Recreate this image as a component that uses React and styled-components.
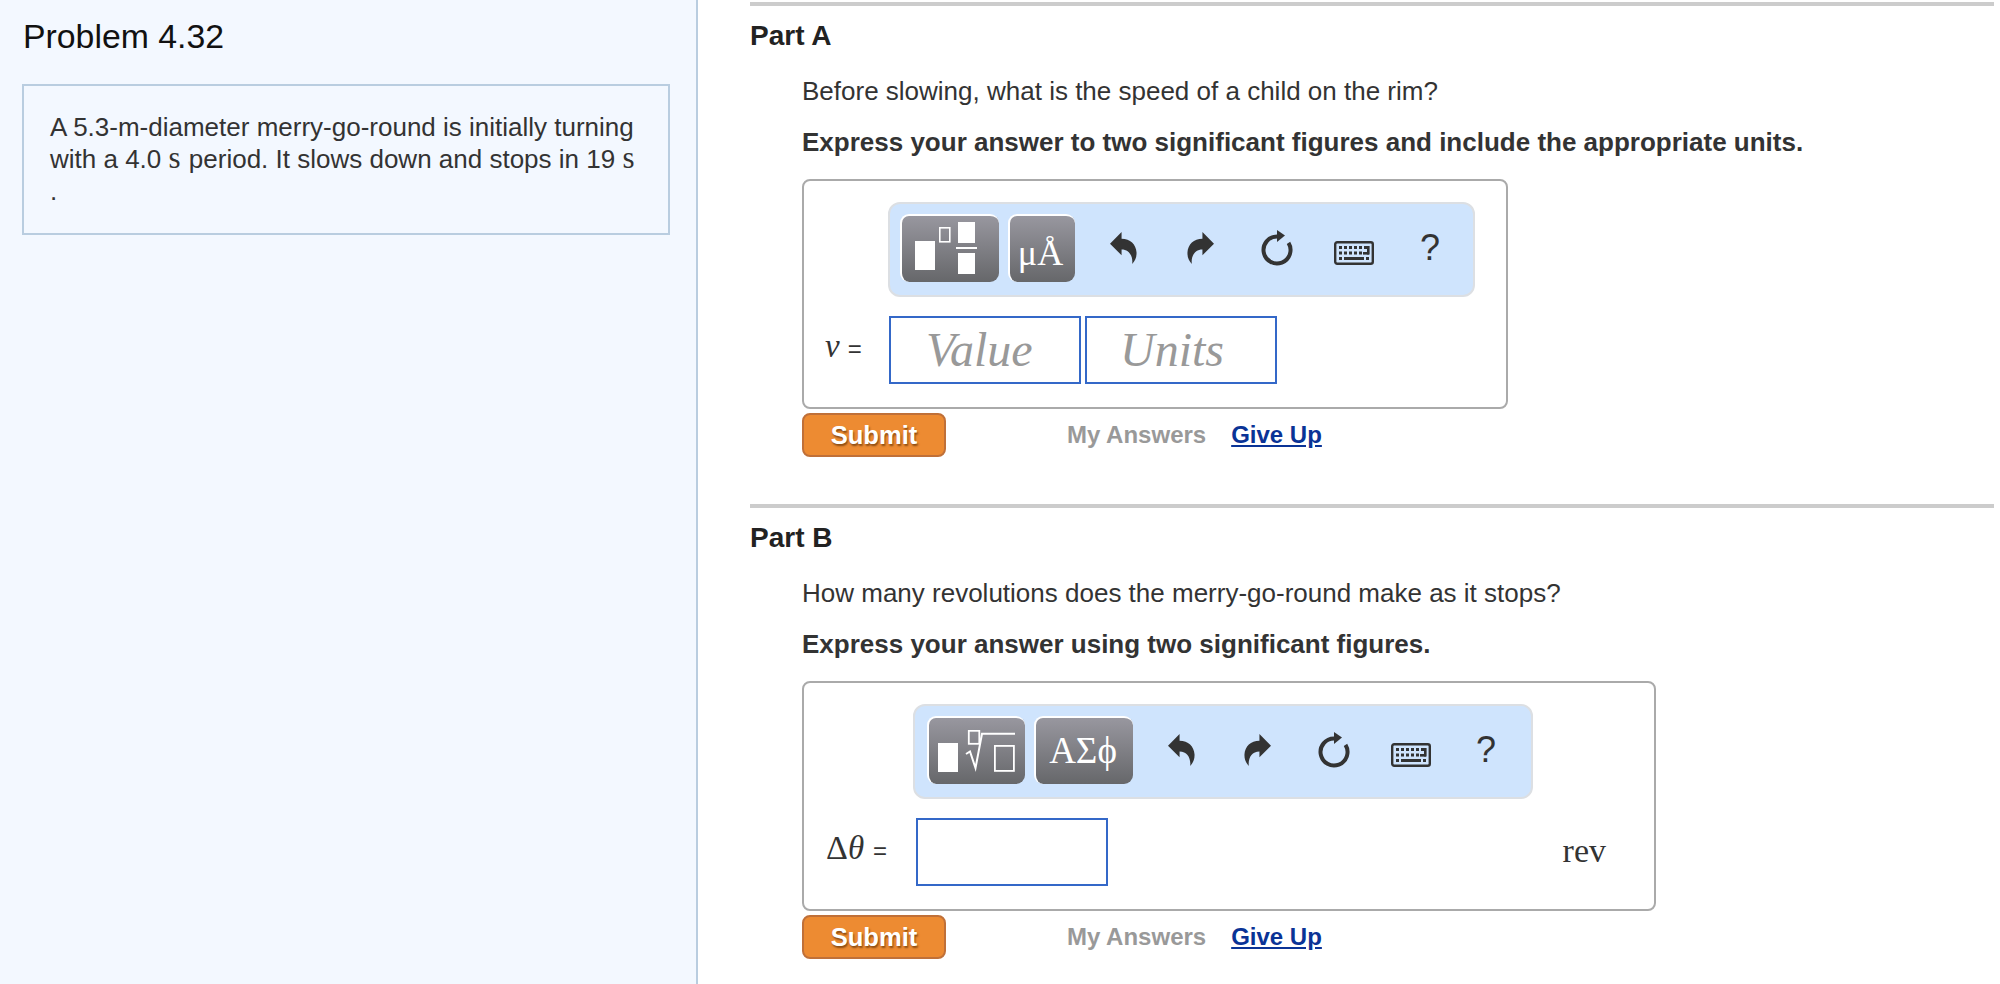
import React from "react";
import styled, { createGlobalStyle } from "styled-components";

const Global = createGlobalStyle`
  html, body { margin: 0; padding: 0; background: #fff; }
  body { font-family: "Liberation Sans", Arial, sans-serif; color: #333; overflow: hidden; }
`;
const Page = styled.div`
  display: grid;
  grid-template-columns: 698px 1fr;
  width: 2000px;
  height: 984px;
  overflow: hidden;
`;
const Sidebar = styled.aside`
  background: #f3f8ff;
  border-right: 2px solid #b9cde0;
  padding: 16px 26px 0 22px;
`;
const Title = styled.h1`
  margin: 0 0 28px 1px;
  font-size: 33.8px;
  line-height: 40px;
  font-weight: 400;
  color: #111;
`;
const StatementBox = styled.div`
  height: 151px;
  box-sizing: border-box;
  border: 2px solid #b9cde0;
  padding: 25px 26px;
  font-size: 26px;
  line-height: 32px;
  color: #333;
`;
const Unit = styled.span`
  font-family: "Liberation Serif", serif;
  font-size: 31px;
  line-height: 0;
  letter-spacing: 1px;
`;
const Main = styled.main`
  padding: 2px 6px 0 52px;
`;
const Part = styled.section`
  border-top: 4px solid #ccc;
  height: ${(p) => p.$h}px;
  box-sizing: border-box;
`;
const PartTitle = styled.h2`
  margin: 14px 0 0;
  font-size: 28px;
  line-height: 32px;
  font-weight: 700;
  color: #222;
`;
const Body = styled.div`
  padding-left: 52px;
`;
const Question = styled.p`
  margin: 23px 0 0;
  font-size: 26px;
  line-height: 32px;
`;
const Instruction = styled.p`
  margin: 19px 0 0;
  font-size: 26px;
  line-height: 32px;
  font-weight: 700;
`;
const AnswerBox = styled.div`
  margin-top: 21px;
  width: ${(p) => p.$w}px;
  height: 230px;
  box-sizing: border-box;
  border: 2px solid #aaa;
  border-radius: 8px;
  padding: 21px 0 0 ${(p) => p.$tool}px;
  display: flex;
  flex-direction: column;
  position: relative;
`;
const Toolbar = styled.div`
  width: ${(p) => p.$w}px;
  height: 95px;
  box-sizing: border-box;
  background: #cfe4fd;
  border: 2px solid #dcdfe3;
  border-radius: 12px;
  display: flex;
  align-items: center;
  padding: 0 0 4px ${(p) => p.$pad}px;
`;
const TemplateButton = styled.div`
  width: ${(p) => p.$w}px;
  height: 68px;
  margin-right: 9px;
  padding: ${(p) => p.$pt || 0}px ${(p) => p.$pr || 0}px ${(p) => p.$pb || 0}px 0;
  box-sizing: border-box;
  border-radius: 9px;
  border-top: 2px solid #fff;
  border-left: 2px solid #fff;
  background: linear-gradient(#98979f, #66676a);
  display: flex;
  align-items: center;
  justify-content: center;
  color: #fff;
  font-family: "Liberation Serif", serif;
  font-size: ${(p) => p.$fs}px;
  flex: none;
`;
const IconRow = styled.div`
  display: flex;
  align-items: center;
  margin-left: ${(p) => p.$ml}px;
  gap: ${(p) => p.$gap}px;
`;
const ToolIcon = styled.div`
  width: 40px;
  height: 44px;
  display: flex;
  align-items: center;
  justify-content: center;
  color: #333;
  flex: none;
`;
const KeyboardSlot = styled(ToolIcon)`
  padding-top: 10px;
  box-sizing: border-box;
`;
const Help = styled(ToolIcon)`
  font-size: 36px;
  padding-right: 2px;
  box-sizing: border-box;
`;
const InputRow = styled.div`
  display: flex;
  margin: 19px 0 0 ${(p) => p.$ml}px;
  gap: 4px;
`;
const Label = styled.div`
  position: absolute;
  left: ${(p) => p.$l}px;
  top: 148px;
  font-size: 24px;
  line-height: 34px;
  color: #333;
  white-space: nowrap;
`;
const MathVar = styled.i`
  font-family: "Liberation Serif", serif;
  font-size: 33px;
  margin-right: ${(p) => p.$mr}px;
`;
const Delta = styled.span`
  font-family: "Liberation Serif", serif;
  font-size: 34px;
`;
const Field = styled.div`
  width: 192px;
  height: 68px;
  box-sizing: border-box;
  border: 2px solid #3468c8;
  background: #fff;
  font-family: "Liberation Serif", serif;
  font-style: italic;
  font-size: 48px;
  line-height: 63px;
  color: #999;
  padding-left: ${(p) => p.$pl || 35}px;
`;
const UnitLabel = styled.div`
  position: absolute;
  right: 48px;
  top: 151px;
  font-family: "Liberation Serif", serif;
  font-size: 34px;
  line-height: 34px;
  color: #333;
`;
const Actions = styled.div`
  display: flex;
  align-items: center;
  margin-top: 4px;
`;
const Submit = styled.button`
  width: 144px;
  height: 44px;
  box-sizing: border-box;
  padding: 0;
  border: 2px solid #c07038;
  border-radius: 8px;
  background: #ed8b32;
  color: #fff;
  font-family: "Liberation Sans", Arial, sans-serif;
  font-size: 25.6px;
  font-weight: 700;
  text-shadow: 1px 2px 2px #8a4a12;
`;
const Muted = styled.span`
  margin-left: 121px;
  font-size: 24px;
  font-weight: 700;
  color: #999;
`;
const GiveUp = styled.a`
  margin-left: 25px;
  font-size: 24px;
  font-weight: 700;
  color: #0a3396;
  text-decoration: underline;
`;

const UndoIcon = ({ flip }) => (
  <svg width="27" height="32" viewBox="0 0 28 33" style={flip ? { transform: "scaleX(-1)" } : undefined}>
    <path d="M0 12 L12 0 V7 C21 7 27 13 27.5 21 C27.8 26 26 30 23 33 C24 25 20 18 12 18 V24 Z" fill="currentColor" />
  </svg>
);
const ResetIcon = () => (
  <svg width="36" height="38" viewBox="0 0 36 38" fill="none">
    <path d="M18 7.5 A13.5 13.5 0 1 0 29.5 13.9" stroke="currentColor" strokeWidth="4" />
    <path d="M18 1 L26 6.5 L18 13 Z" fill="currentColor" />
  </svg>
);
const KeyboardIcon = () => (
  <svg width="40" height="24" viewBox="0 0 40 24" fill="none">
    <rect x="1.2" y="1.2" width="37.6" height="21.6" rx="2" stroke="currentColor" strokeWidth="2.4" />
    <g fill="currentColor">
      {[5, 10, 15, 20, 25, 30].map((x) => <rect key={x} x={x} y="5" width="3" height="3" />)}
      <rect x="33" y="5" width="2.6" height="8.5" />
      {[5, 10, 15, 20, 25].map((x) => <rect key={x} x={x} y="10.5" width="3" height="3" />)}
      <rect x="29" y="11" width="6" height="2.6" />
      <rect x="5" y="16" width="3" height="3" />
      <rect x="10" y="16" width="20" height="3" />
      <rect x="32" y="16" width="3" height="3" />
    </g>
  </svg>
);
const FractionGlyph = () => (
  <svg width="62" height="52" viewBox="0 0 62 52">
    <rect x="0" y="19" width="20" height="29" fill="#fff" />
    <rect x="24.8" y="5.8" width="10" height="14" fill="none" stroke="#fff" strokeWidth="1.6" />
    <rect x="43" y="0" width="17" height="21" fill="#fff" />
    <rect x="41" y="25" width="21" height="2" fill="#fff" />
    <rect x="43" y="31" width="17" height="21" fill="#fff" />
  </svg>
);
const RootGlyph = () => (
  <svg width="77" height="42" viewBox="0 0 77 42" fill="none">
    <rect x="0" y="13" width="20" height="29" fill="#fff" />
    <rect x="30.8" y="0.8" width="10.5" height="13" stroke="#fff" strokeWidth="1.8" />
    <path d="M28 24 L32 21.5 L37.5 38 L44 3.8 H77" stroke="#fff" strokeWidth="2" />
    <rect x="56.9" y="15.9" width="19" height="25" stroke="#fff" strokeWidth="1.8" />
  </svg>
);

const Tools = ({ ml, gap }) => (
  <IconRow $ml={ml} $gap={gap}>
    <ToolIcon><UndoIcon /></ToolIcon>
    <ToolIcon><UndoIcon flip /></ToolIcon>
    <ToolIcon><ResetIcon /></ToolIcon>
    <KeyboardSlot><KeyboardIcon /></KeyboardSlot>
    <Help>?</Help>
  </IconRow>
);
const ActionRow = () => (
  <Actions>
    <Submit>Submit</Submit>
    <Muted>My Answers</Muted>
    <GiveUp>Give Up</GiveUp>
  </Actions>
);

export default function App() {
  return (
    <Page>
      <Global />
      <Sidebar>
        <Title>Problem 4.32</Title>
        <StatementBox>
          A 5.3-m-diameter merry-go-round is initially turning with a 4.0 <Unit>s</Unit> period. It slows down and stops in 19 <Unit>s</Unit>
          <br />.
        </StatementBox>
      </Sidebar>
      <Main>
        <Part $h={502}>
          <PartTitle>Part A</PartTitle>
          <Body>
            <Question>Before slowing, what is the speed of a child on the rim?</Question>
            <Instruction>Express your answer to two significant figures and include the appropriate units.</Instruction>
            <AnswerBox $w={706} $tool={84}>
              <Toolbar $w={587} $pad={10}>
                <TemplateButton $w={99} $fs={35} $pr={9} $pb={2}><FractionGlyph /></TemplateButton>
                <TemplateButton $w={67} $fs={36} $pt={9} $pr={4}>μÅ</TemplateButton>
                <Tools ml={19} gap={37} />
              </Toolbar>
              <InputRow $ml={1}>
                <Field>Value</Field>
                <Field $pl={33}>Units</Field>
              </InputRow>
              <Label $l={21}><MathVar $mr={8}>v</MathVar>=</Label>
            </AnswerBox>
            <ActionRow />
          </Body>
        </Part>
        <Part $h={480}>
          <PartTitle>Part B</PartTitle>
          <Body>
            <Question>How many revolutions does the merry-go-round make as it stops?</Question>
            <Instruction>Express your answer using two significant figures.</Instruction>
            <AnswerBox $w={854} $tool={109}>
              <Toolbar $w={620} $pad={12}>
                <TemplateButton $w={98} $fs={35} $pr={2}><RootGlyph /></TemplateButton>
                <TemplateButton $w={99} $fs={37} $pr={3}>ΑΣϕ</TemplateButton>
                <Tools ml={19} gap={36.5} />
              </Toolbar>
              <InputRow $ml={3}>
                <Field />
              </InputRow>
              <Label $l={22}><Delta>Δ</Delta><MathVar $mr={9}>θ</MathVar>=</Label>
              <UnitLabel>rev</UnitLabel>
            </AnswerBox>
            <ActionRow />
          </Body>
        </Part>
      </Main>
    </Page>
  );
}
